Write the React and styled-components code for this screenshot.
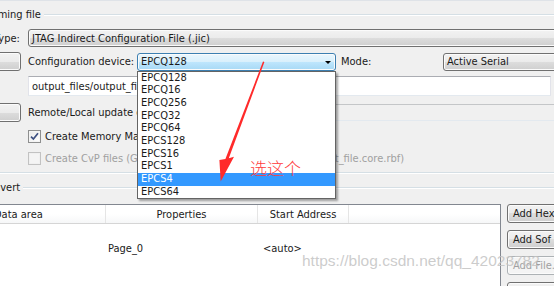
import React from "react";
import styled, { createGlobalStyle } from "styled-components";

const GlobalStyle = createGlobalStyle`
  html, body {
    margin: 0;
    padding: 0;
  }
  body {
    width: 554px;
    height: 286px;
    overflow: hidden;
    background: #f0f0f0;
    font-family: "DejaVu Sans Condensed", "DejaVu Sans", sans-serif;
    font-stretch: condensed;
    font-size: 11px;
    color: #1a1a1a;
  }
`;

const devices = [
  "EPCQ128",
  "EPCQ16",
  "EPCQ256",
  "EPCQ32",
  "EPCQ64",
  "EPCS128",
  "EPCS16",
  "EPCS1",
  "EPCS4",
  "EPCS64",
];

const Page = styled.div`
  position: relative;
  width: 554px;
  height: 286px;
  overflow: hidden;
  display: flex;
  flex-direction: column;
`;

const TopEdge = styled.div`
  height: 2px;
  background: #f5f6f7;
  border-bottom: 1px solid #dfe3e8;
`;

const GroupHead = styled.div`
  display: flex;
  align-items: center;
  gap: 3px;
  height: 14px;
  margin-top: ${(p) => p.$top}px;
`;

const GroupTitle = styled.span`
  white-space: nowrap;
  margin-left: ${(p) => p.$shift}px;
`;

const GroupLine = styled.div`
  flex: 1;
  border-top: 1px solid #d5dfe5;
  border-bottom: 1px solid #ffffff;
`;

const GroupBottom = styled.div`
  margin-top: ${(p) => p.$top}px;
  border-top: 1px solid #d5dfe5;
  border-bottom: 1px solid #ffffff;
`;

const Row = styled.div`
  display: flex;
  align-items: center;
  height: ${(p) => p.$h || 19}px;
  margin-top: ${(p) => p.$top}px;
  white-space: nowrap;
`;

const Label = styled.span`
  flex: none;
  width: ${(p) => p.$w}px;
  margin-left: ${(p) => p.$shift || 0}px;
  white-space: nowrap;
`;

const winButton = `
  border: 1px solid #707070;
  border-radius: 3px;
  background: linear-gradient(#f2f2f2 0%, #ebebeb 50%, #dddddd 50%, #cfcfcf 100%);
  box-shadow: inset 0 0 0 1px #fbfbfb;
`;

const SideButton = styled.div`
  flex: none;
  box-sizing: border-box;
  width: 40px;
  height: 19px;
  margin-left: -19px;
  margin-right: 7px;
  ${winButton}
`;

const Combo = styled.div`
  position: relative;
  flex: none;
  box-sizing: border-box;
  width: ${(p) => p.$w}px;
  height: 18px;
  display: flex;
  align-items: center;
  padding-left: 3px;
  ${winButton}
  ${(p) =>
    p.$focused &&
    `
    border-color: #3c7fb1;
    background: linear-gradient(#eaf6fd 0%, #d9f0fc 50%, #bee6fd 50%, #a7d9f5 100%);
  `}
`;

const DownArrow = styled.span`
  position: absolute;
  right: 4px;
  top: 7px;
  width: 0;
  height: 0;
  border-left: 3px solid transparent;
  border-right: 3px solid transparent;
  border-top: 3px solid #000;
`;

const DeviceField = styled.div`
  position: relative;
  flex: none;
  margin-right: 5px;
`;

const DropList = styled.ul`
  position: absolute;
  z-index: 2;
  top: 18px;
  left: 0;
  box-sizing: border-box;
  width: 199px;
  margin: 0;
  padding: 0;
  list-style: none;
  background: #ffffff;
  border: 1px solid #646464;
  box-shadow: 2px 2px 2px rgba(0, 0, 0, 0.35);
`;

const DropItem = styled.li`
  height: 12.7px;
  line-height: 12.7px;
  padding-left: 3px;
  color: ${(p) => (p.$selected ? "#ffffff" : "#1a1a1a")};
  background: ${(p) => (p.$selected ? "#3399ff" : "transparent")};
`;

const TextInput = styled.div`
  flex: none;
  box-sizing: border-box;
  width: ${(p) => p.$w}px;
  height: ${(p) => p.$h || 20}px;
  display: flex;
  align-items: center;
  padding-left: 3px;
  background: ${(p) => (p.$disabled ? "#f0f0f0" : "#ffffff")};
  border: 1px solid #e2e3ea;
  border-top-color: ${(p) => (p.$disabled ? "#c4c6c8" : "#abadb3")};
  border-bottom-color: #e3e9ef;
`;

const CheckRow = styled.div`
  display: flex;
  align-items: center;
  gap: 4px;
  height: 13px;
  margin-top: ${(p) => p.$top}px;
  padding-left: 28px;
  white-space: nowrap;
  color: ${(p) => (p.$disabled ? "#a0a0a0" : "#1a1a1a")};
`;

const Box = styled.span`
  flex: none;
  box-sizing: border-box;
  width: 13px;
  height: 13px;
  display: flex;
  align-items: center;
  justify-content: center;
  border: 1px solid ${(p) => (p.$disabled ? "#c2c2c2" : "#8e8f8f")};
  background: ${(p) =>
    p.$disabled ? "#f4f4f4" : "linear-gradient(135deg, #e8e8e8, #ffffff)"};
  box-shadow: inset 0 0 0 1px ${(p) => (p.$disabled ? "#f0f0f0" : "#f4f4f4")};
`;

const ConvertArea = styled.div`
  flex: 1;
  display: flex;
  gap: 6px;
  margin-top: 10px;
`;

const Table = styled.div`
  flex: none;
  box-sizing: border-box;
  width: 512px;
  margin-left: -11px;
  background: #ffffff;
  border: 1px solid #828790;
  border-bottom: none;
`;

const HeaderRow = styled.div`
  display: flex;
  height: 18px;
  background: linear-gradient(#ffffff 0%, #ffffff 50%, #f6f7f8 100%);
  border-bottom: 1px solid #d5d5d5;
`;

const HeadCell = styled.div`
  box-sizing: border-box;
  flex: ${(p) => (p.$w ? "none" : "1")};
  width: ${(p) => p.$w || 0}px;
  display: flex;
  align-items: center;
  justify-content: ${(p) => (p.$left ? "flex-start" : "center")};
  padding-left: ${(p) => (p.$left ? 4 : 0)}px;
  border-right: 1px solid ${(p) => (p.$last ? "transparent" : "#e5e5e5")};
`;

const DataRow = styled.div`
  display: flex;
  height: 16px;
  margin-top: 16px;
  align-items: center;
`;

const DataCell = styled.div`
  flex: none;
  box-sizing: border-box;
  width: ${(p) => p.$w}px;
  padding-left: ${(p) => p.$pad}px;
  white-space: nowrap;
`;

const ButtonColumn = styled.div`
  display: flex;
  flex-direction: column;
  gap: 7px;
`;

const SideAction = styled.div`
  box-sizing: border-box;
  width: 80px;
  height: 19px;
  display: flex;
  align-items: center;
  padding-left: 5px;
  white-space: nowrap;
  ${winButton}
  ${(p) =>
    p.$disabled &&
    `
    color: #a0a0a0;
    border-color: #adb2b5;
    background: #f4f4f4;
  `}
`;

const Watermark = styled.div`
  position: absolute;
  left: 302px;
  top: 252px;
  font-family: "Liberation Sans", Arial, sans-serif;
  font-size: 15.5px;
  color: rgba(195, 195, 195, 0.85);
  white-space: nowrap;
  pointer-events: none;
`;

const Annotation = styled.svg`
  position: absolute;
  left: 0;
  top: 0;
  pointer-events: none;
  z-index: 3;
`;

const Note = styled.div`
  position: absolute;
  left: 250px;
  top: 155px;
  z-index: 3;
  font-family: "Noto Sans CJK SC", sans-serif;
  font-size: 17px;
  font-weight: 300;
  color: #ff3b3b;
  white-space: nowrap;
`;

function CheckMark() {
  return (
    <svg width="9" height="9" viewBox="0 0 9 9">
      <path d="M1 4.6 L3.4 7 L8 1.2" fill="none" stroke="#3d5082" strokeWidth="1.7" />
    </svg>
  );
}

export default function App() {
  return (
    <>
      <GlobalStyle />
      <Page>
        <TopEdge />
        <GroupHead $top={7}>
          <GroupTitle $shift={-44}>Programming file</GroupTitle>
          <GroupLine />
        </GroupHead>

        <Row $top={8}>
          <Label $w={34} $shift={-6}>Type:</Label>
          <Combo $w={560}>JTAG Indirect Configuration File (.jic)</Combo>
        </Row>

        <Row $top={5}>
          <SideButton />
          <Label $w={109}>Configuration device:</Label>
          <DeviceField>
            <Combo $w={199} $focused>
              EPCQ128
              <DownArrow />
            </Combo>
            <DropList>
              {devices.map((d) => (
                <DropItem key={d} $selected={d === "EPCS4"}>
                  {d}
                </DropItem>
              ))}
            </DropList>
          </DeviceField>
          <Label $w={102}>Mode:</Label>
          <Combo $w={130}>Active Serial</Combo>
        </Row>

        <Row $top={5} $h={20}>
          <Label $w={28} />
          <TextInput $w={523}>output_files/output_file.jic</TextInput>
        </Row>

        <Row $top={7}>
          <SideButton />
          <Label $w={200}>Remote/Local update difference file:</Label>
          <TextInput $w={330} $h={17} $disabled />
        </Row>

        <CheckRow $top={8}>
          <Box>
            <CheckMark />
          </Box>
          Create Memory Map File (Generate output_file.map)
        </CheckRow>
        <CheckRow $top={9} $disabled>
          <Box $disabled />
          Create CvP files (Generate output_file.periph.jic and output_file.core.rbf)
        </CheckRow>

        <GroupBottom $top={7} />
        <GroupHead $top={7}>
          <GroupTitle $shift={-19}>Convert</GroupTitle>
          <GroupLine />
        </GroupHead>

        <ConvertArea>
          <Table>
            <HeaderRow>
              <HeadCell $w={116} $left>
                Data area
              </HeadCell>
              <HeadCell $w={152}>Properties</HeadCell>
              <HeadCell $w={91}>Start Address</HeadCell>
              <HeadCell $last />
            </HeaderRow>
            <DataRow>
              <DataCell $w={116} $pad={0} />
              <DataCell $w={152} $pad={2}>
                Page_0
              </DataCell>
              <DataCell $w={91} $pad={5}>
                &lt;auto&gt;
              </DataCell>
            </DataRow>
          </Table>
          <ButtonColumn>
            <SideAction>Add Hex Data</SideAction>
            <SideAction>Add Sof Page</SideAction>
            <SideAction $disabled>Add File...</SideAction>
            <SideAction>Remove</SideAction>
          </ButtonColumn>
        </ConvertArea>

        <Watermark>https://blog.csdn.net/qq_42023782</Watermark>

        <Annotation width="554" height="286" viewBox="0 0 554 286">
          <polygon
            points="263,61.5 264.4,62 228.8,158.2 234,156.8 220.7,181.5 219.4,160 225.4,159"
            fill="#ff2a2a"
          />
        </Annotation>
        <Note>选这个</Note>
      </Page>
    </>
  );
}
